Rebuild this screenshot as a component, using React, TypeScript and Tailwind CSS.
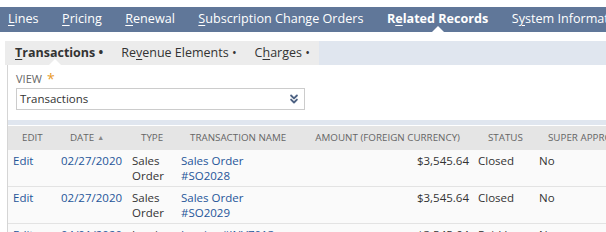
import { ChevronsDown } from "lucide-react";

type Row = {
  date: string;
  type: [string, string];
  name: [string, string];
  amount: string;
  status: string;
  superApproved: string;
};

const rows: Row[] = [
  {
    date: "02/27/2020",
    type: ["Sales", "Order"],
    name: ["Sales Order", "#SO2028"],
    amount: "$3,545.64",
    status: "Closed",
    superApproved: "No",
  },
  {
    date: "02/27/2020",
    type: ["Sales", "Order"],
    name: ["Sales Order", "#SO2029"],
    amount: "$3,545.64",
    status: "Closed",
    superApproved: "No",
  },
  {
    date: "04/01/2020",
    type: ["Invoice", ""],
    name: ["Invoice #INV7013", ""],
    amount: "$3,545.64",
    status: "Paid In Full",
    superApproved: "No",
  },
];

// underline the access key letter
function Key({ pre, k, post }: { pre?: string; k: string; post: string }) {
  return (
    <span>
      {pre}
      <span className="underline underline-offset-2">{k}</span>
      {post}
    </span>
  );
}

function Notch({ className }: { className: string }) {
  return (
    <div
      className={
        "absolute bottom-0 h-0 w-0 border-x-[6px] border-b-[6px] border-x-transparent border-b-white " +
        className
      }
    />
  );
}

export default function App() {
  return (
    <div className="h-[232px] w-[606px] overflow-hidden bg-white pt-[7px] font-['Open_Sans',sans-serif] text-[11.5px] text-[#333]">
      <div className="relative flex h-[25px] items-center gap-[23.5px] whitespace-nowrap bg-[#607799] pl-[8px] text-[12.6px] text-white">
        <Key k="L" post="ines" />
        <Key k="P" post="ricing" />
        <Key k="R" post="enewal" />
        <Key k="S" post="ubscription Change Orders" />
        <span className="font-bold">
          <Key pre="R" k="e" post="lated Records" />
        </span>
        <Key pre="S" k="y" post="stem Information" />
        <Notch className="left-[432px]" />
      </div>

      <div className="relative ml-[5px] mt-[9px] flex h-[24px] items-center bg-[#e0e6ef] text-[12.5px]">
        <div className="flex h-full items-center gap-[18px] whitespace-nowrap bg-[#ececec] pl-[10px] pr-[9px]">
          <span className="font-bold">
            <Key k="T" post="ransactions" /> •
          </span>
          <span>
            <Key pre="Re" k="v" post="enue Elements" /> •
          </span>
          <span>
            <Key pre="C" k="h" post="arges" /> •
          </span>
        </div>
        <Notch className="left-[44px]" />
      </div>

      <div className="ml-[7px] border-l border-[#d5d5d5] bg-white">
        <div className="px-[8px] pt-[7px]">
          <div className="flex items-center gap-[5px] text-[11px] leading-[14px] text-[#666]">
            VIEW <span className="text-[14px] text-[#e89b2a]">*</span>
          </div>
          <div className="mt-[2px] flex h-[22px] w-[289px] items-center justify-between border border-[#ccc] pl-[3px] pr-[3px]">
            <span>Transactions</span>
            <ChevronsDown className="h-[14px] w-[14px] text-[#4d6283]" strokeWidth={3.2} />
          </div>
        </div>

        <div className="mt-[10px] h-[5px] bg-[#e0e6ef]" />
        <div className="mt-[1px] flex h-[24px] items-center whitespace-nowrap bg-[#e5e5e5] text-[9.8px] uppercase text-[#666]">
          <div className="w-[48px] shrink-0 pl-[14px]">Edit</div>
          <div className="flex w-[71px] shrink-0 items-center gap-[3px] pl-[14px]">
            Date <span className="text-[7px] text-[#888]">▲</span>
          </div>
          <div className="w-[49px] shrink-0 pl-[14px]">Type</div>
          <div className="w-[130px] shrink-0 pl-[14px]">Transaction Name</div>
          <div className="w-[167px] shrink-0 pr-[13px] text-right">Amount (Foreign Currency)</div>
          <div className="w-[61px] shrink-0 pl-[15px]">Status</div>
          <div className="min-w-0 flex-1 overflow-hidden pl-[14px]">Super Approved</div>
        </div>

        {rows.map((r, i) => (
          <div
            key={i}
            className="flex border-b border-[#e3e3e3] bg-[#fafafa] py-[3px] leading-[15px]"
          >
            <div className="w-[48px] shrink-0 pl-[5px] text-[#255599]">Edit</div>
            <div className="w-[71px] shrink-0 whitespace-nowrap pl-[5px] text-[#255599]">{r.date}</div>
            <div className="w-[49px] shrink-0 pl-[5px]">
              <div>{r.type[0]}</div>
              {r.type[1] && <div>{r.type[1]}</div>}
            </div>
            <div className="w-[130px] shrink-0 pl-[5px] text-[#255599]">
              <div>{r.name[0]}</div>
              {r.name[1] && <div>{r.name[1]}</div>}
            </div>
            <div className="w-[167px] shrink-0 pr-[4px] text-right">{r.amount}</div>
            <div className="w-[61px] shrink-0 pl-[5px]">{r.status}</div>
            <div className="min-w-0 flex-1 pl-[5px]">{r.superApproved}</div>
          </div>
        ))}
      </div>
    </div>
  );
}
